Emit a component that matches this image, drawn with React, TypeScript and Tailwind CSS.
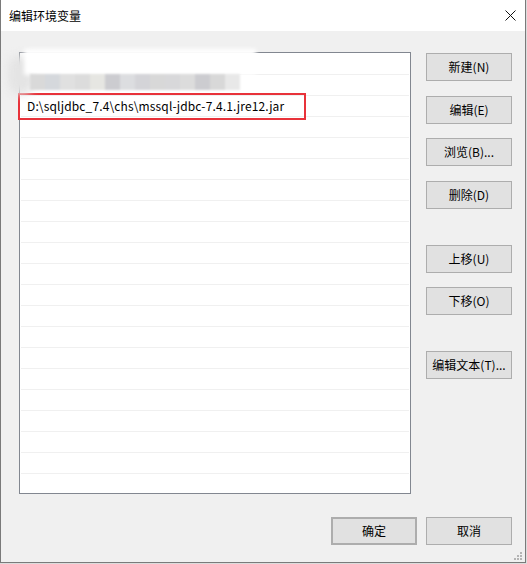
import React from "react";

// 右侧操作按钮，mt 为与上一个按钮的间距
const sideButtons = [
  { label: "新建(N)", mt: "mt-[1px]" },
  { label: "编辑(E)", mt: "mt-[15px]" },
  { label: "浏览(B)...", mt: "mt-[14px]" },
  { label: "删除(D)", mt: "mt-[15px]" },
  { label: "上移(U)", mt: "mt-[36px]" },
  { label: "下移(O)", mt: "mt-[14px]" },
  { label: "编辑文本(T)...", mt: "mt-[36px]" },
];

// 打码马赛克的色块
const mosaic = [
  "#d9d9d9", "#d5d8dc", "#e0e0e0", "#dcdcdc", "#e6e6e2", "#ccccd0", "#dcdde0",
  "#d4d4d8", "#d8d8d8", "#d8d8da", "#dcdcdc", "#ccccd0", "#d8d8d8", "#e8e8e8",
];

const rows = Array.from({ length: 21 }, (_, i) => i);

function Button({ label, className = "" }: { label: string; className?: string }) {
  return (
    <button
      className={`w-[86px] h-[28px] bg-[#e1e1e1] border border-[#adadad] text-[12px] text-black flex items-center justify-center ${className}`}
    >
      {label}
    </button>
  );
}

export default function App() {
  return (
    <div
      className="w-[527px] h-[564px] bg-[#dcdcdc] overflow-hidden"
      style={{ fontFamily: '"Noto Sans CJK SC", "Noto Sans", sans-serif' }}
    >
      <div className="relative w-[526px] h-[563px] bg-[#f0f0f0] border border-t-0 border-[#7a7a7a] flex flex-col">
        {/* 标题栏 */}
        <div className="h-[31px] bg-white flex items-center justify-between pl-[8px] pr-[9px] shrink-0">
          <span className="text-[12px] text-black leading-none">编辑环境变量</span>
          <svg width="11" height="11" viewBox="0 0 11 11">
            <path d="M0.5 0.5L10.5 10.5M10.5 0.5L0.5 10.5" stroke="#111" strokeWidth="1" />
          </svg>
        </div>

        <div className="flex pl-[18px] pt-[21px]">
          {/* 路径列表 */}
          <div className="relative w-[392px] h-[442px] bg-white border border-[#828790] px-[1px] pt-[1px] overflow-visible">
            <div className="h-full overflow-hidden">
              {rows.map((i) => (
                <div key={i} className="relative h-[21px] border-b border-[#f0f0f0] flex items-center">
                  {i === 2 && (
                    <span className="pl-[6px] text-[12px] text-black leading-none tracking-[0.14px]">
                      D:\sqljdbc_7.4\chs\mssql-jdbc-7.4.1.jre12.jar
                    </span>
                  )}
                </div>
              ))}
            </div>

            {/* 选中项标注框 */}
            <div className="absolute left-[-2px] top-[40px] w-[288px] h-[27px] border-2 border-[#e8323a]" />

            {/* 打码区域 */}
            <div className="absolute left-[-12px] top-[2px] w-[26px] h-[40px] rounded-full bg-[#e4e4e4] blur-[4px]" />
            <div className="absolute left-[4px] top-[-4px] w-[232px] h-[26px] bg-white blur-[2px]" />
            <div className="absolute left-[10px] top-[21px] flex blur-[1px]">
              {mosaic.map((c, i) => (
                <div key={i} className="w-[15px] h-[16px]" style={{ backgroundColor: c }} />
              ))}
            </div>
          </div>

          {/* 右侧按钮 */}
          <div className="ml-[15px] flex flex-col">
            {sideButtons.map((b) => (
              <Button key={b.label} label={b.label} className={b.mt} />
            ))}
          </div>
        </div>

        {/* 底部按钮 */}
        <div className="flex justify-end gap-[9px] pr-[13px] mt-[23px]">
          <Button label="确定" className="border-2 border-[#0078d7]" />
          <Button label="取消" />
        </div>

        {/* 右下角拖拽点 */}
        <svg className="absolute right-[2px] bottom-[1px]" width="10" height="10" viewBox="0 0 10 10">
          <rect x="7" y="1" width="2" height="2" fill="#b4b4b4" />
          <rect x="4" y="4" width="2" height="2" fill="#b4b4b4" />
          <rect x="7" y="4" width="2" height="2" fill="#b4b4b4" />
          <rect x="1" y="7" width="2" height="2" fill="#b4b4b4" />
          <rect x="4" y="7" width="2" height="2" fill="#b4b4b4" />
          <rect x="7" y="7" width="2" height="2" fill="#b4b4b4" />
        </svg>
      </div>
    </div>
  );
}
